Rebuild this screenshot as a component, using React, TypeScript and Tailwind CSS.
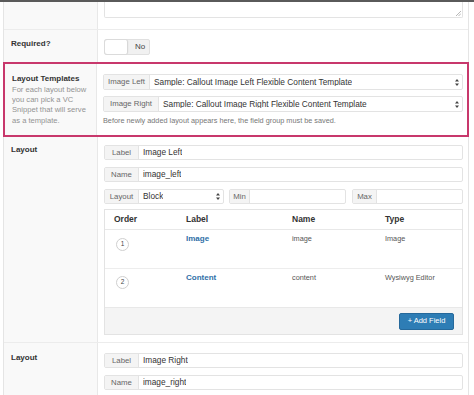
import React from "react";

const Arrows = () => (
  <svg width="4" height="7" viewBox="0 0 4 7" className="shrink-0">
    <path d="M2 0L4 2.6H0Z M2 7L0 4.4H4Z" fill="#444" />
  </svg>
);

function Group({
  prepend,
  pw,
  value,
  select,
  h = "h-[15px]",
  className = "",
}: {
  prepend: string;
  pw: string;
  value?: string;
  select?: boolean;
  h?: string;
  className?: string;
}) {
  return (
    <div className={`flex ${h} border border-[#e3e3e3] rounded-[2px] bg-white ${className}`}>
      <div className={`${pw} shrink-0 flex items-center justify-center bg-[#f4f4f4] border-r border-[#e3e3e3] text-[#666] text-[7.8px] leading-none`}>
        {prepend}
      </div>
      <div className="flex-1 flex items-center justify-between pl-[4px] pr-[3px] text-[8.3px] leading-none text-[#333] min-w-0">
        <span className="truncate">{value}</span>
        {select && <Arrows />}
      </div>
    </div>
  );
}

function Row({
  label,
  desc,
  children,
  lpt,
  className = "",
  lw = "w-[94px]",
  border = true,
}: {
  label: string;
  desc?: string[];
  children: React.ReactNode;
  lpt: string;
  className?: string;
  lw?: string;
  border?: boolean;
}) {
  return (
    <div className={`flex ${border ? "border-b border-[#ececec]" : ""} ${className}`}>
      <div className={`${lw} shrink-0 bg-[#f9f9f9] border-r border-[#e8e8e8] pl-[7px] ${lpt}`}>
        <div className="text-[8px] leading-[10px] font-bold text-[#333]">{label}</div>
        {desc && (
          <div className="text-[7.6px] leading-[10.4px] text-[#939393] mt-[0.5px]">
            {desc.map((d) => (
              <div key={d}>{d}</div>
            ))}
          </div>
        )}
      </div>
      {children}
    </div>
  );
}

function Circle({ n }: { n: string }) {
  return (
    <div className="w-[13px] h-[13px] rounded-full border border-[#cfcfcf] bg-white flex items-center justify-center text-[6.5px] leading-none text-[#444]">
      {n}
    </div>
  );
}

export default function App() {
  return (
    <div
      className="w-[474px] h-[395px] overflow-hidden bg-white relative"
      style={{ fontFamily: '"Liberation Sans", Arial, Helvetica, sans-serif' }}
    >
      <div className="h-[2px] bg-[#5a5a5a]" />
      <div className="ml-[3px] w-[466px] border-x border-[#e5e5e5]">
        {/* textarea row */}
        <Row label="" lpt="pt-0">
          <div className="flex-1 pl-[6px] pr-[5px] pb-[11px]">
            <div className="h-[16px] border-x border-b border-[#e3e3e3] rounded-b-[2px] relative">
              <svg width="5" height="5" viewBox="0 0 5 5" className="absolute right-[1px] bottom-[1px]">
                <path d="M5 0L0 5 M5 2.5L2.5 5" stroke="#999" strokeWidth="0.7" />
              </svg>
            </div>
          </div>
        </Row>
        {/* Required */}
        <Row label="Required?" lpt="pt-[9px]" border={false}>
          <div className="flex-1 pl-[6px] pr-[5px] pt-[9px] pb-[7px]">
            <div className="w-[46px] h-[16px] bg-[#f1f1f1] border border-[#e0e0e0] rounded-[2px] flex items-center">
              <div className="w-[23px] h-[14px] bg-white border-r border-[#d8d8d8] rounded-[2px] shadow-[0_0_1px_rgba(0,0,0,0.2)]" />
              <span className="ml-[7px] text-[8px] leading-none text-[#444]">No</span>
            </div>
          </div>
        </Row>
        {/* Layout templates - highlighted */}
        <div className="-mx-px border-2 border-[#c8386c]">
          <Row
            label="Layout Templates"
            desc={["For each layout below", "you can pick a VC", "Snippet that will serve", "as a template."]}
            lpt="pt-[10px]"
            lw="w-[92px]"
            border={false}
          >
            <div className="flex-1 pl-[6px] pr-[4px] pt-[10px] pb-[9px]">
              <Group
                prepend="Image Left"
                pw="w-[46px]"
                value="Sample: Callout Image Left Flexible Content Template"
                select
                h="h-[16px]"
              />
              <Group
                prepend="Image Right"
                pw="w-[55px]"
                value="Sample: Callout Image Right Flexible Content Template"
                select
                h="h-[16px]"
                className="mt-[6px]"
              />
              <div className="mt-[4px] text-[7.3px] leading-[10px] text-[#777]">
                Before newly added layout appears here, the field group must be saved.
              </div>
            </div>
          </Row>
        </div>
        {/* Layout Image Left */}
        <Row label="Layout" lpt="pt-[8px]">
          <div className="flex-1 pl-[6px] pr-[5px] pt-[8px] pb-[7px]">
            <Group prepend="Label" pw="w-[34px]" value="Image Left" />
            <Group prepend="Name" pw="w-[34px]" value="image_left" className="mt-[7px]" />
            <div className="flex mt-[7px]">
              <Group prepend="Layout" pw="w-[34px]" value="Block" select className="w-[120px]" />
              <Group prepend="Min" pw="w-[20px]" className="w-[117px] ml-[5px]" />
              <Group prepend="Max" pw="w-[24px]" className="flex-1 ml-[6px]" />
            </div>
            <div className="mt-[5px] border border-[#e3e3e3]">
              <div className="flex h-[20px] items-center border-b border-[#e8e8e8] text-[8.5px] font-bold text-[#333] leading-none">
                <div className="w-[72px] pl-[9px]">Order</div>
                <div className="w-[106px] pl-[9px]">Label</div>
                <div className="w-[93px] pl-[9px]">Name</div>
                <div className="flex-1 pl-[9px]">Type</div>
              </div>
              <div className="flex h-[39px] border-b border-[#ededed]">
                <div className="w-[72px] pl-[11px] pt-[8px]">
                  <Circle n="1" />
                </div>
                <div className="w-[106px] pl-[9px] pt-[4px] text-[8px] leading-[10px] font-bold text-[#2f6fa7]">Image</div>
                <div className="w-[93px] pl-[9px] pt-[4px] text-[7.3px] leading-[10px] text-[#555]">image</div>
                <div className="flex-1 pl-[9px] pt-[4px] text-[7.3px] leading-[10px] text-[#555]">Image</div>
              </div>
              <div className="flex h-[38px]">
                <div className="w-[72px] pl-[11px] pt-[7px]">
                  <Circle n="2" />
                </div>
                <div className="w-[106px] pl-[9px] pt-[4px] text-[8px] leading-[10px] font-bold text-[#2f6fa7]">Content</div>
                <div className="w-[93px] pl-[9px] pt-[4px] text-[7.3px] leading-[10px] text-[#555]">content</div>
                <div className="flex-1 pl-[9px] pt-[4px] text-[7.3px] leading-[10px] text-[#555]">Wysiwyg Editor</div>
              </div>
              <div className="h-[27px] bg-[#f4f4f4] border-t border-[#e8e8e8] flex items-center justify-end pr-[8px]">
                <div className="h-[17px] w-[55px] bg-[#2e7db5] border border-[#26699b] rounded-[2px] flex items-center justify-center text-white text-[7.5px] leading-none">
                  + Add Field
                </div>
              </div>
            </div>
          </div>
        </Row>
        {/* Layout Image Right */}
        <Row label="Layout" lpt="pt-[10px]" border={false}>
          <div className="flex-1 pl-[6px] pr-[5px] pt-[10px] pb-[20px]">
            <Group prepend="Label" pw="w-[34px]" value="Image Right" />
            <Group prepend="Name" pw="w-[34px]" value="image_right" className="mt-[7px]" />
          </div>
        </Row>
      </div>
    </div>
  );
}
